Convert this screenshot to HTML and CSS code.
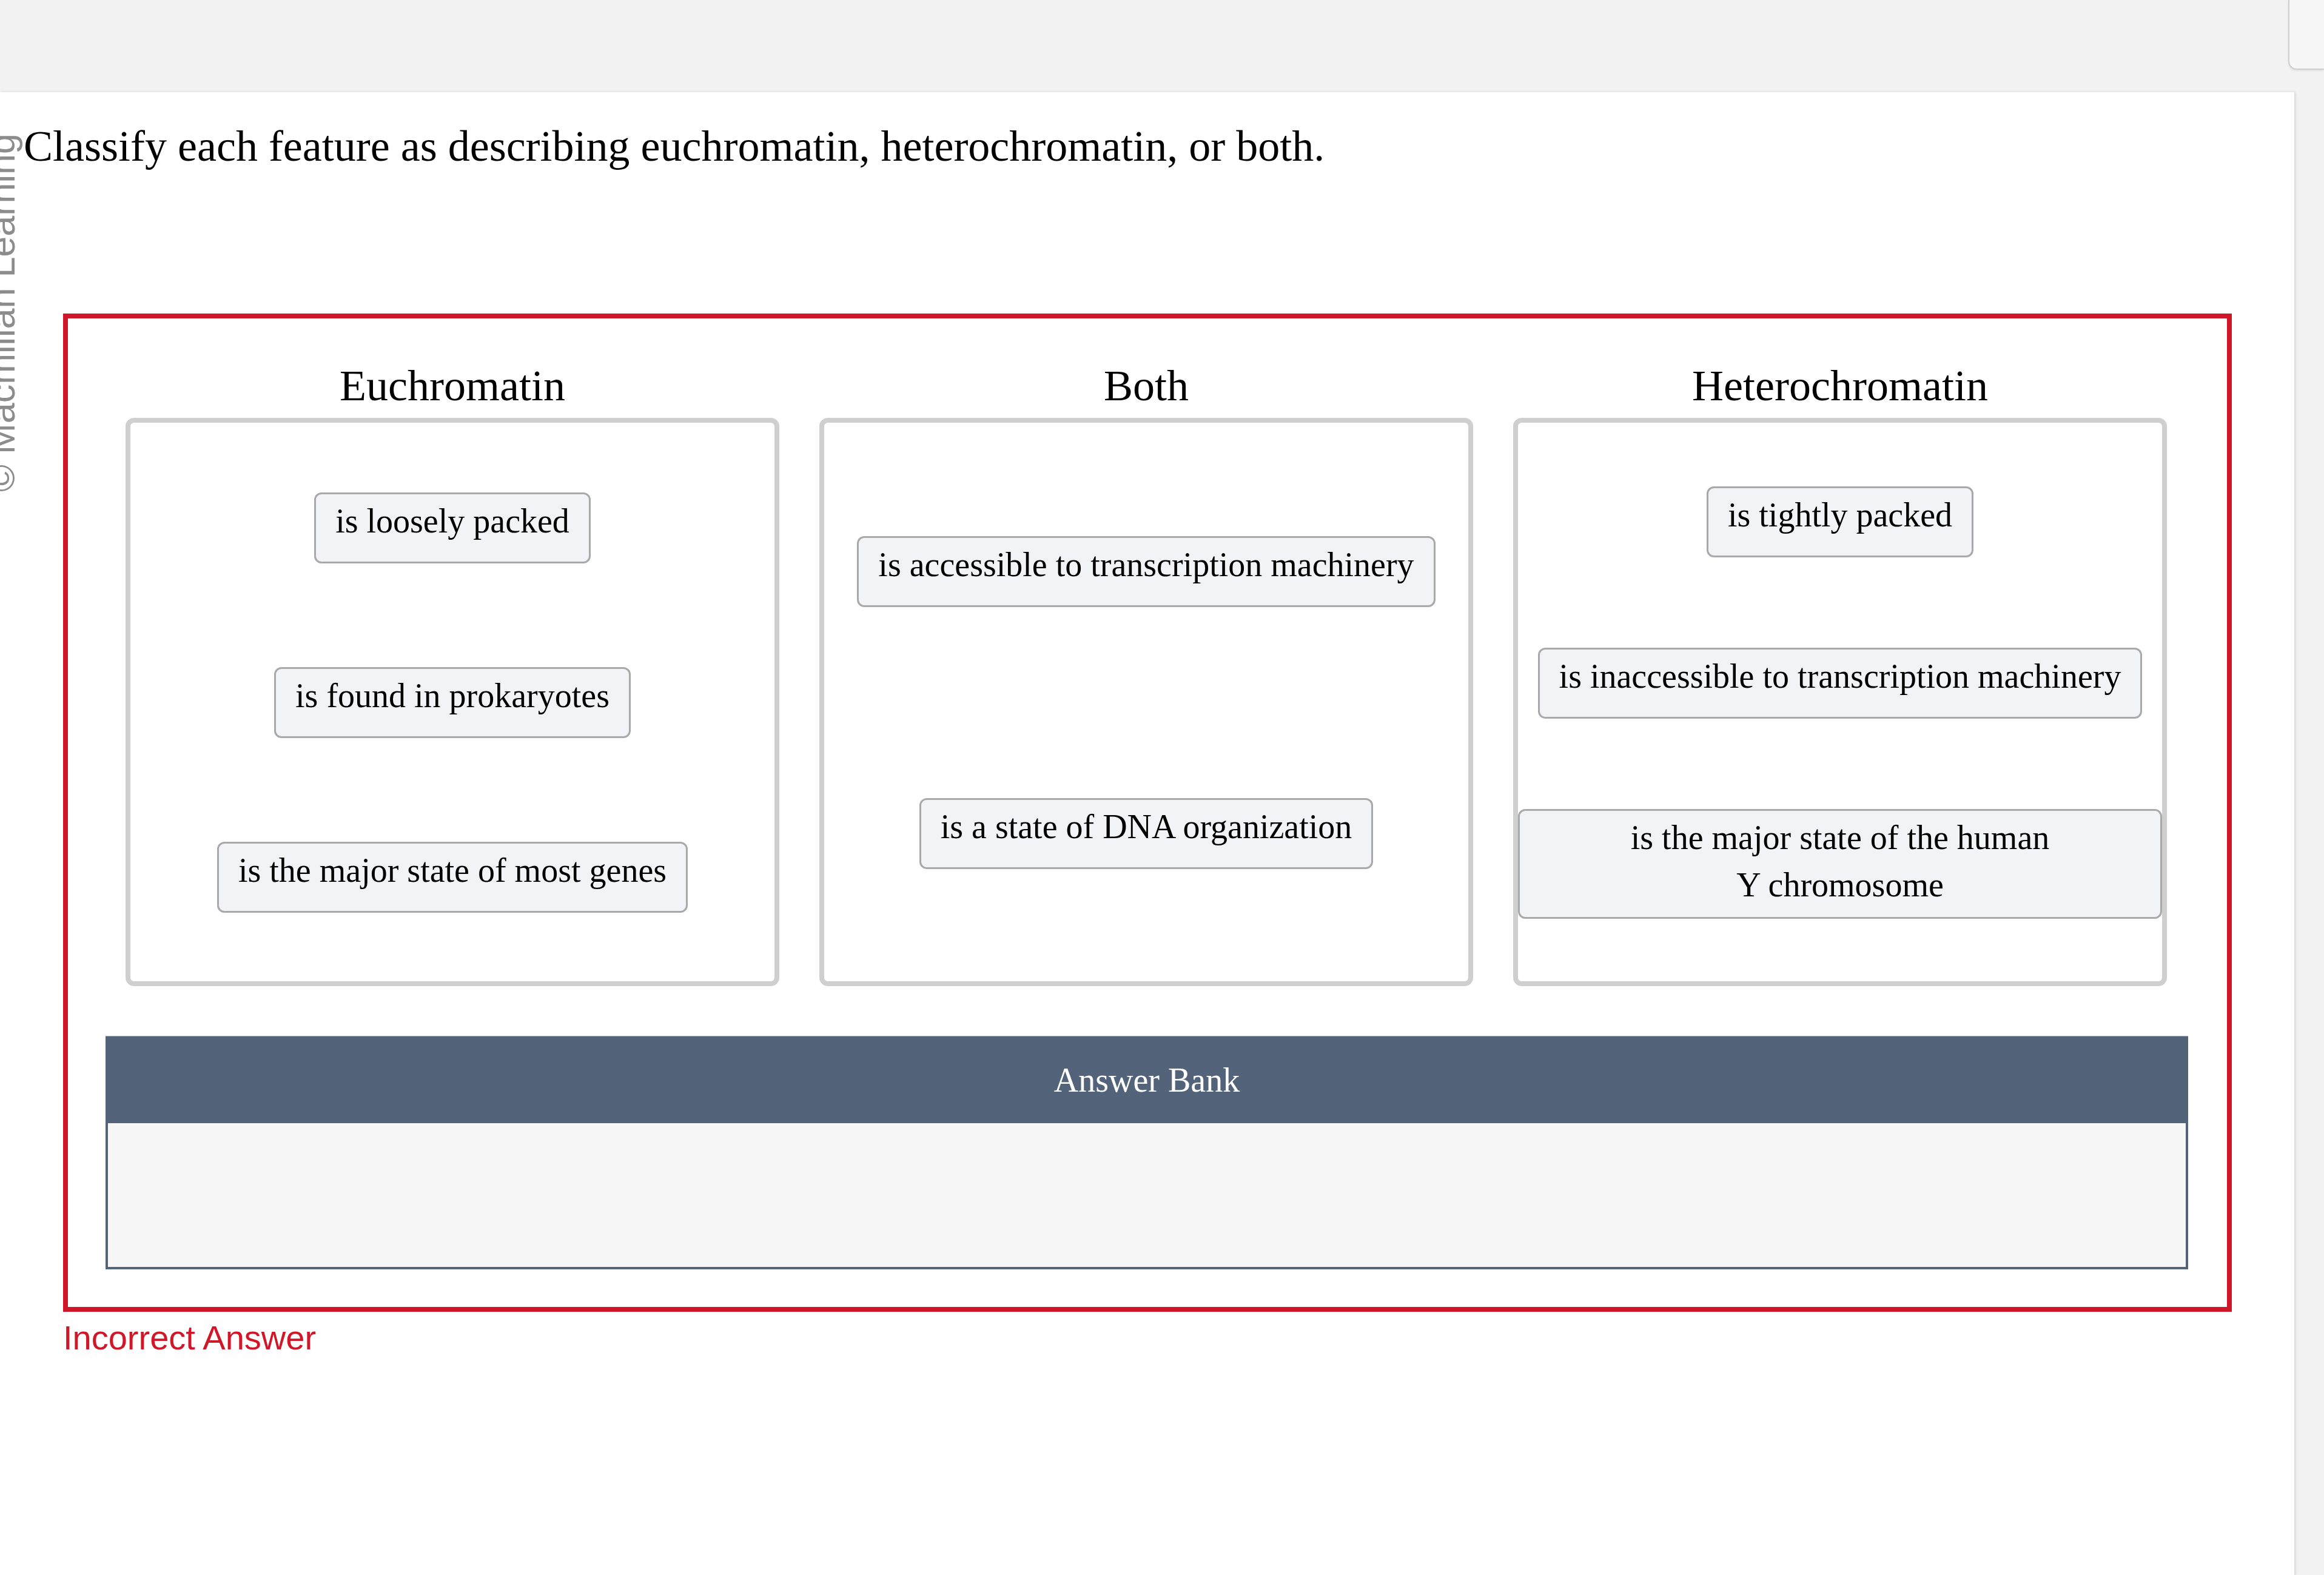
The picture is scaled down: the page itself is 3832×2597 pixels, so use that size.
FILE: index.html
```html
<!DOCTYPE html>
<html lang="en">
<head>
<meta charset="utf-8">
<title>Classify each feature</title>
<link rel="stylesheet" href="styles.css">
</head>
<body>
<div class="topbar"><div class="tab"></div></div>
<div class="watermark">© Macmillan Learning</div>
<main class="panel">
  <p class="prompt">Classify each feature as describing euchromatin, heterochromatin, or both.</p>
  <section class="quiz">
    <div class="board">
      <div class="columns">
        <div class="column">
          <h2 class="col-title">Euchromatin</h2>
          <div class="drop drop-eu">
            <div class="chip">is loosely packed</div>
            <div class="chip">is found in prokaryotes</div>
            <div class="chip">is the major state of most genes</div>
          </div>
        </div>
        <div class="column">
          <h2 class="col-title">Both</h2>
          <div class="drop drop-both">
            <div class="chip">is accessible to transcription machinery</div>
            <div class="chip">is a state of DNA organization</div>
          </div>
        </div>
        <div class="column">
          <h2 class="col-title">Heterochromatin</h2>
          <div class="drop drop-hetero">
            <div class="chip">is tightly packed</div>
            <div class="chip">is inaccessible to transcription machinery</div>
            <div class="chip chip-wide">is the major state of the human<br>Y chromosome</div>
          </div>
        </div>
      </div>
      <div class="bank">
        <div class="bank-head">Answer Bank</div>
        <div class="bank-body"></div>
      </div>
    </div>
    <div class="feedback">Incorrect Answer</div>
  </section>
</main>
</body>
</html>
```
FILE: styles.css
```css
html, body {
  margin: 0;
  padding: 0;
}

body {
  background: #f2f2f2;
  font-family: "Liberation Serif", "Times New Roman", serif;
  color: #000;
  position: relative;
  min-height: 2597px;
  overflow: hidden;
}

.topbar {
  height: 152px;
  display: flex;
  justify-content: flex-end;
}

.tab {
  width: 57px;
  height: 113px;
  background: #f7f7f7;
  border-left: 2px solid #cfcfcf;
  border-bottom: 2px solid #cfcfcf;
  border-radius: 0 0 0 14px;
  box-shadow: 0 2px 3px rgba(0, 0, 0, 0.08);
}

.watermark {
  position: absolute;
  left: 0;
  top: 0;
  transform-origin: 0 0;
  transform: translate(-27px, 811px) rotate(-90deg);
  font-family: "Liberation Sans", Arial, sans-serif;
  font-size: 61px;
  line-height: 61px;
  color: #8c8c8c;
  white-space: nowrap;
  z-index: 2;
}

.panel {
  width: 3783px;
  min-height: 2445px;
  background: #fff;
  box-shadow: 2px 0 4px rgba(0, 0, 0, 0.12);
  overflow: hidden;
}

.prompt {
  margin: 0;
  padding: 47px 0 0 39px;
  font-size: 72px;
  line-height: 84px;
}

.quiz {
  margin: 234px 0 0 104px;
  width: 3576px;
}

.board {
  box-sizing: border-box;
  width: 3576px;
  border: 8px solid #d0172a;
  padding: 70px 64px 62px 62px;
}

.columns {
  display: flex;
  gap: 66px;
  padding: 0 34px 0 33px;
}

.column {
  width: 1078px;
  display: flex;
  flex-direction: column;
}

.col-title {
  margin: 0 0 11px;
  font-size: 72px;
  font-weight: normal;
  line-height: 83px;
  text-align: center;
}

.drop {
  box-sizing: border-box;
  height: 937px;
  border: 8px solid #cfcfcf;
  border-radius: 14px;
  background: #fff;
  display: flex;
  flex-direction: column;
  align-items: center;
}

.drop-eu {
  padding-top: 115px;
  gap: 171px;
}

.drop-both {
  padding-top: 187px;
  gap: 315px;
}

.drop-hetero {
  padding-top: 105px;
  gap: 149px;
}

.chip {
  box-sizing: border-box;
  min-height: 117px;
  max-width: 100%;
  padding: 5px 32px 14px;
  border: 3px solid #a9a9a9;
  border-radius: 12px;
  background: #f2f3f7;
  font-size: 56px;
  line-height: 78px;
  text-align: center;
}

.chip-wide {
  width: 100%;
}

.bank {
  margin-top: 82px;
}

.bank-head {
  height: 144px;
  background: #52637a;
  border-top: 1px solid #9aa6b6;
  box-sizing: border-box;
  color: #fff;
  font-size: 56px;
  display: flex;
  align-items: center;
  justify-content: center;
}

.bank-body {
  box-sizing: border-box;
  height: 241px;
  background: #f7f7f7;
  border: 4px solid #52637a;
  border-top: none;
}

.feedback {
  margin: 11px 0 0 0;
  font-family: "Liberation Sans", Arial, sans-serif;
  font-size: 56px;
  line-height: 64px;
  color: #d0172a;
}
```
